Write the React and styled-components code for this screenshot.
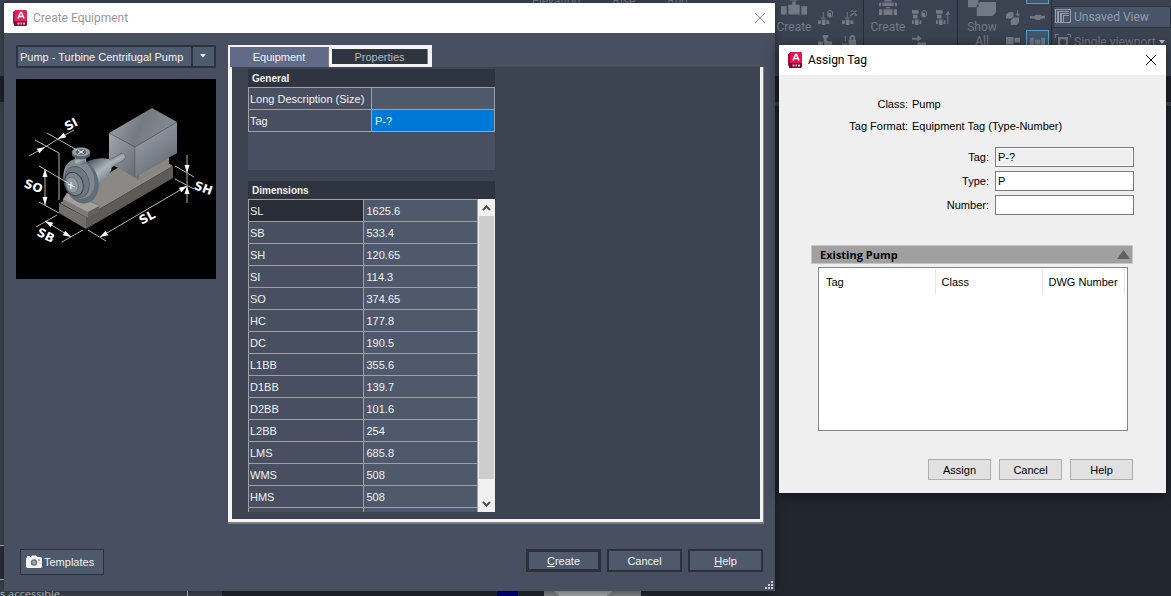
import React, {useState} from "react";
import styled, {createGlobalStyle} from "styled-components";

const dimensions = [
	["SL", "1625.6"],
	["SB", "533.4"],
	["SH", "120.65"],
	["SI", "114.3"],
	["SO", "374.65"],
	["HC", "177.8"],
	["DC", "190.5"],
	["L1BB", "355.6"],
	["D1BB", "139.7"],
	["D2BB", "101.6"],
	["L2BB", "254"],
	["LMS", "685.8"],
	["WMS", "508"],
	["HMS", "508"],
	["", ""],
];

const AppLogo = ({faded}) => (
	<Logo viewBox="0 0 14 16" $faded={faded} aria-hidden="true">
		<path d="M0 2l3-2v12l-3 2z" fill="#b0063a" />
		<path d="M2 0h11l1 1v11H2z" fill="#e5164f" />
		<path d="M1 11h13v4l-1 1H1z" fill="#7d0a2c" />
		<path d="M5 8.500L7.500 2.500h1L11 8.500M6 6.500h4" fill="none" stroke="#fff" strokeWidth="1.500" />
		<path d="M4.500 13.500h2M7.500 13.500h1.500M10 13.500h2" stroke="#e9b9c8" strokeWidth="2" />
	</Logo>
);

const CloseIcon = () => (
	<svg width="12" height="12" viewBox="0 0 12 12" aria-hidden="true">
		<path d="M1 1l10 10M11 1L1 11" stroke="currentColor" fill="none" />
	</svg>
);

const CameraIcon = () => (
	<svg width="16" height="14" viewBox="0 0 16 14" aria-hidden="true">
		<path d="M1 3V1h3v1h1l1-1.500h4L11.500 2H15l1 1v9l-1 1H1l-1-1V3z" fill="#f4f4f4" />
		<circle cx="8" cy="7.500" r="3.200" fill="#6e7278" />
		<circle cx="8" cy="7.500" r="1.700" fill="#a4a8ad" />
		<path d="M12 5h2" stroke="#6e7278" />
	</svg>
);

const Arrow = ({x, y, angle}) => (
	<path d="M0 0l-8-2.500v5z" fill="#fff" transform={`translate(${x} ${y}) rotate(${angle})`} />
);

const PumpDrawing = () => (
	<Drawing viewBox="0 0 200 200" role="img" aria-label="Turbine centrifugal pump">
		<defs>
			<linearGradient id="top" x1="0" y1="0" x2="1" y2="0.300">
				<stop offset="0" stopColor="#a9abb3" />
				<stop offset="0.550" stopColor="#747a82" />
				<stop offset="1" stopColor="#858b93" />
			</linearGradient>
			<linearGradient id="left" x1="0" y1="0" x2="1" y2="1">
				<stop offset="0" stopColor="#a4a6ae" />
				<stop offset="1" stopColor="#646c74" />
			</linearGradient>
			<linearGradient id="right" x1="0" y1="0" x2="0.600" y2="1">
				<stop offset="0" stopColor="#a6a9b1" />
				<stop offset="1" stopColor="#626c76" />
			</linearGradient>
			<linearGradient id="cone" x1="0.200" y1="0" x2="0.800" y2="1">
				<stop offset="0" stopColor="#4f5a64" />
				<stop offset="0.450" stopColor="#aeb4bb" />
				<stop offset="1" stopColor="#59636d" />
			</linearGradient>
		</defs>
		<rect width="200" height="200" fill="#000" />
		<path d="M44 124L131 71l26 16-87 51z" fill="#8b8885" />
		<path d="M43 124l27 14v12l-27-16z" fill="#716e6b" />
		<path d="M70 138l87-51v12l-87 51z" fill="#5d5a58" />
		<path d="M106 91l17 10 30-17v-7l-30 17z" fill="#726f6c" />
		<path d="M123 96l30-17v5l-30 17z" fill="#898683" />
		<path d="M47 120l4-6 32 12v6l-11 6-25-13z" fill="#a29f9c" stroke="#615e5b" strokeWidth="0.500" />
		<path d="M47 120l25 13v5l-25-13z" fill="#7d7a77" />
		<path d="M72 133l11-6v5l-11 6z" fill="#625f5c" />
		<path d="M93 54l43-25 25 14-42 25z" fill="url(#top)" />
		<path d="M93 54l26 14v30L93 84z" fill="url(#left)" />
		<path d="M119 68l42-25v31l-42 24z" fill="url(#right)" />
		<path d="M93 54l26 14v30M119 68l42-25" fill="none" stroke="#555d65" strokeWidth="0.600" />
		<path d="M93 81l13-7q4 1 3 6l-14 9z" fill="url(#cone)" stroke="#4a535c" strokeWidth="0.500" />
		<path d="M72 82q10-4 21-2 4 5 2 12-8 9-13 17z" fill="url(#cone)" />
		<ellipse cx="65" cy="102" rx="17" ry="23" fill="#606c77" transform="rotate(-18 65 102)" />
		<ellipse cx="63" cy="100" rx="15" ry="20" fill="#808890" transform="rotate(-18 63 100)" />
		<ellipse cx="61" cy="103" rx="12" ry="16" fill="#6d7780" stroke="#48515a" strokeWidth="0.600" transform="rotate(-18 61 103)" />
		<ellipse cx="58" cy="105" rx="9" ry="12" fill="#7d868e" stroke="#39424b" transform="rotate(-20 58 105)" />
		<ellipse cx="56" cy="106" rx="6" ry="8" fill="#929aa1" stroke="#59626a" strokeWidth="0.600" transform="rotate(-20 56 106)" />
		<path d="M59 76v8q6 4 11 0v-8z" fill="url(#cone)" />
		<path d="M56 73v4q9 7 18 0v-4z" fill="#57616a" />
		<ellipse cx="65" cy="73" rx="9" ry="4.500" fill="#9ba1a8" stroke="#555e67" strokeWidth="0.600" />
		<ellipse cx="65" cy="73" rx="5.500" ry="2.800" fill="#5d666e" />
		<path d="M62 71l6 4M62 75l6-4M52 105l7 3M55 103v7" stroke="#fff" />
		<g stroke="#e2e2e2" strokeWidth="0.800" fill="none">
			<path d="M13 77l16-9M42 60l16-9M29 68l13-8M19 61l24 13v47M31 54l30 17" />
			<path d="M29 90v36M23 87l29 17M23 123l20 11" />
			<path d="M29 142l26 16M20 148l21-12M46 163l21-12" />
			<path d="M84 158l87-51M72 151l18 11M159 100l19 10M159 87l19 11" />
			<path d="M171 76v48" stroke="#777" strokeWidth="1.500" />
		</g>
		<Arrow x={29} y={68} angle={-30} />
		<Arrow x={42} y={60} angle={150} />
		<Arrow x={29} y={90} angle={-90} />
		<Arrow x={29} y={126} angle={90} />
		<Arrow x={29} y={142} angle={210} />
		<Arrow x={55} y={158} angle={30} />
		<Arrow x={84} y={158} angle={150} />
		<Arrow x={171} y={107} angle={-30} />
		<Arrow x={171} y={94} angle={90} />
		<Arrow x={171} y={107} angle={-90} />
		<DrawingLabel transform="translate(57 49) rotate(-28)">SI</DrawingLabel>
		<DrawingLabel transform="translate(16 111) rotate(20)">SO</DrawingLabel>
		<DrawingLabel transform="translate(28 160) rotate(26)">SB</DrawingLabel>
		<DrawingLabel transform="translate(133 142) rotate(-28)">SL</DrawingLabel>
		<DrawingLabel transform="translate(186 113) rotate(20)">SH</DrawingLabel>
	</Drawing>
);

const ribbonPaths = {
	pipe: "M0 10h3.500v5H0zM4.500 9h7v6h-7zM12.500 10H16v5h-3.500zM5.500 5h5v1.500h-5zM7 7h2v2H7z",
	flange: "M5 1h6v2H5zM0 4h2v3H0zM3 4h10v3H3zM14 4h2v3h-2zM6 8h4v1H6zM0 10h3v5H0zM4 10h8v5H4zM13 10h3v5h-3z",
	boxes: "M0 6h6v5H0zM5 10l2-2h9v6l-2 2H5z",
	attach: "M5 2h1v6H5zM3 8h5v1H3zM0 11h3v4H0zM4 10h4v6H4zM9 11h3v4H9zM10 2l2-2h2l2 2v4l-2 2h-2l-1-1V3h3v3h1V2l-1-1h-2l-1 1v5h-1z",
	link: "M5 2h1v6H5zM3 8h5v1H3zM0 11h3v4H0zM4 10h4v6H4zM9 11h3v4H9zM8 6l7-6 1 1-7 6zM9 1l2-1 5 5-1 2-2-2 1-1-3-3-1 1z",
	elbow: "M5 0h6v3H9c0 4 2 4 6 4v5h-5C6 12 6 8 6 3H5zM0 7h5v4H0z",
	lock: "M3 1h1v6H3zM0 9h6v1H0zM8 5V2l2-2h2l2 2v3h1v6H7V5zM10 2v3h2V2z",
	valve: "M0 0h7v4H0zM1 5h5v4H1zM0 11h2v4H0zM3 10h4v6H3zM8 11h2v4H8zM10 2l2-2h2l2 2v4l-2 2h-2l-1-1V3h3v3h1V2l-1-1h-2l-1 1v5h-1z",
	raise: "M0 0h7v4H0zM1 5h5v4H1zM0 11h2v4H0zM3 10h4v6H3zM8 11h2v4H8zM12 15V5h-2l3-4 2 4h-2v10z",
	sheet: "M0 3h6V0l4 4-4 3V5H0zM6 8h9v8H5z",
	cubes: "M0 5l3-3h5v5l-2 2H0zM5 11l3-3h6v5l-3 3H5zM12 0h1v4h2l-2 3-3-3h2z",
	saddle: "M0 6l4 1 2-2h5l1 1h4v3h-4l-2 2-4-1-2-1H0z",
	blocks: "M0 2h8v8H0zM9 3h6v5H9z",
	group: "M0 3h4v9H0zM5 5h6v5H5zM12 3h4v9h-4z",
	view: "M0 0h16v14H0zM1 1v12h14V1zM2 2h12v1H4v10H2zM5 4h9v1H7v8H5zM8 6h6v1H9v6H8z",
	frame: "M0 0h4v1H1v3H0zM12 0h4v4h-1V1h-3zM3 3h10v10H3zM8 5a3 3 0 100 6 3 3 0 000-6z",
};

const RibbonIcon = ({name, size = 15}) => (
	<svg width={size} height={size} viewBox="0 0 16 16" aria-hidden="true">
		<path d={ribbonPaths[name]} fill="currentColor" fillRule="evenodd" />
	</svg>
);

const Ribbon = () => (
	<RibbonBar>
		<RibbonTail>
			<span>Elevation</span>
			<span>Rise</span>
			<span>Run</span>
		</RibbonTail>
		<RibbonPanel>
			<BigTool><RibbonIcon name="pipe" size={26} />Create</BigTool>
			<ToolGrid>
				<Tool><RibbonIcon name="attach" /></Tool>
				<Tool><RibbonIcon name="link" /></Tool>
				<Tool><RibbonIcon name="elbow" /></Tool>
				<Tool><RibbonIcon name="lock" /></Tool>
			</ToolGrid>
		</RibbonPanel>
		<RibbonPanel>
			<BigTool><RibbonIcon name="flange" size={18} />Create</BigTool>
			<ToolGrid>
				<Tool><RibbonIcon name="valve" /></Tool>
				<Tool><RibbonIcon name="raise" /></Tool>
				<Tool><RibbonIcon name="sheet" /></Tool>
			</ToolGrid>
		</RibbonPanel>
		<RibbonPanel>
			<BigTool $twoLines><RibbonIcon name="boxes" size={28} />Show<br />All</BigTool>
			<ToolGrid $threeRows>
				<Tool />
				<Tool $active />
				<Tool><RibbonIcon name="cubes" /></Tool>
				<Tool><RibbonIcon name="saddle" /></Tool>
				<Tool><RibbonIcon name="blocks" /></Tool>
				<Tool $active><RibbonIcon name="group" /></Tool>
			</ToolGrid>
		</RibbonPanel>
		<ViewPanel>
			<ViewField $filled><RibbonIcon name="view" size={16} />Unsaved View</ViewField>
			<ViewField>
				<RibbonIcon name="frame" size={16} />
				Single viewport
				<svg width="6" height="4" viewBox="0 0 6 4" aria-hidden="true"><path d="M0 0h6L3 4z" fill="#c0c4ca" /></svg>
			</ViewField>
		</ViewPanel>
	</RibbonBar>
);

const CreateEquipment = () => {
	const [tab, setTab] = useState("Equipment");

	return (
		<CreateWindow role="dialog" aria-label="Create Equipment">
			<TitleBar $inactive>
				<AppLogo faded />
				<h1>Create Equipment</h1>
				<CloseButton aria-label="Close"><CloseIcon /></CloseButton>
			</TitleBar>
			<CreateBody>
				<SideColumn>
					<Combo>
						<select aria-label="Equipment type">
							<option>Pump - Turbine Centrifugal Pump</option>
						</select>
						<svg width="21" height="19" viewBox="0 0 21 19" aria-hidden="true">
							<path d="M7 7h6l-3 3.500z" fill="#f0f0f0" />
						</svg>
					</Combo>
					<PumpDrawing />
				</SideColumn>
				<TabArea>
					<TabStrip role="tablist">
						{["Equipment", "Properties"].map((name) => (
							<Tab
								key={name}
								role="tab"
								aria-selected={tab === name}
								$active={tab === name}
								onClick={() => setTab(name)}
							>
								{name}
							</Tab>
						))}
					</TabStrip>
					<TabPanel role="tabpanel">
						<Section>
							<SectionTitle>General</SectionTitle>
							<GeneralBox>
								<PropertyTable>
									<tbody>
										<tr>
											<NameCell>Long Description (Size)</NameCell>
											<ValueCell />
										</tr>
										<tr>
											<NameCell>Tag</NameCell>
											<ValueCell $selected>P-?</ValueCell>
										</tr>
									</tbody>
								</PropertyTable>
							</GeneralBox>
						</Section>
						<Section>
							<SectionTitle>Dimensions</SectionTitle>
							<ScrollBox>
								<PropertyTable>
									<tbody>
										{dimensions.map(([name, value], i) => (
											<tr key={i}>
												<NameCell $current={i === 0}>{name}</NameCell>
												<ValueCell>{value}</ValueCell>
											</tr>
										))}
									</tbody>
								</PropertyTable>
								<ScrollBar>
									<ScrollButton aria-label="Scroll up">
										<svg width="9" height="6" viewBox="0 0 9 6"><path d="M1 5l3.500-3.500L8 5" fill="none" stroke="#505050" strokeWidth="2" /></svg>
									</ScrollButton>
									<ScrollThumb />
									<ScrollButton aria-label="Scroll down">
										<svg width="9" height="6" viewBox="0 0 9 6"><path d="M1 1l3.500 3.500L8 1" fill="none" stroke="#505050" strokeWidth="2" /></svg>
									</ScrollButton>
								</ScrollBar>
							</ScrollBox>
						</Section>
					</TabPanel>
				</TabArea>
			</CreateBody>
			<CreateFooter>
				<TemplatesButton><CameraIcon />Templates</TemplatesButton>
				<DarkButton $primary><u>C</u>reate</DarkButton>
				<DarkButton>Cancel</DarkButton>
				<DarkButton><u>H</u>elp</DarkButton>
			</CreateFooter>
			<Grip viewBox="0 0 8 8" aria-hidden="true">
				<path d="M6 0h2v2H6zM3 3h2v2H3zM6 3h2v2H6zM0 6h2v2H0zM3 6h2v2H3zM6 6h2v2H6z" fill="#c8cacf" />
			</Grip>
		</CreateWindow>
	);
};

const AssignTag = () => {
	const [type, setType] = useState("P");
	const [number, setNumber] = useState("");

	return (
		<AssignWindow role="dialog" aria-label="Assign Tag">
			<TitleBar>
				<AppLogo />
				<h1>Assign Tag</h1>
				<CloseButton aria-label="Close"><CloseIcon /></CloseButton>
			</TitleBar>
			<AssignBody>
				<InfoList>
					<dt>Class:</dt>
					<dd>Pump</dd>
					<dt>Tag Format:</dt>
					<dd>Equipment Tag (Type-Number)</dd>
				</InfoList>
				<FieldGrid>
					<label htmlFor="tag">Tag:</label>
					<TextField id="tag" value="P-?" readOnly />
					<label htmlFor="type">Type:</label>
					<TextField id="type" value={type} onChange={(e) => setType(e.target.value)} />
					<label htmlFor="number">Number:</label>
					<TextField id="number" value={number} onChange={(e) => setNumber(e.target.value)} />
				</FieldGrid>
				<ExistingHeader>
					Existing Pump
					<svg width="13" height="9" viewBox="0 0 13 9" aria-hidden="true"><path d="M6.500 0L13 9H0z" fill="#606060" /></svg>
				</ExistingHeader>
				<ExistingList>
					<table>
						<thead>
							<tr>
								<th>Tag</th>
								<th>Class</th>
								<th>DWG Number</th>
							</tr>
						</thead>
					</table>
				</ExistingList>
				<AssignFooter>
					<LightButton>Assign</LightButton>
					<LightButton>Cancel</LightButton>
					<LightButton>Help</LightButton>
				</AssignFooter>
			</AssignBody>
		</AssignWindow>
	);
};

const App = () => (
	<Desktop>
		<GlobalStyle />
		<Backdrop>
			<Ribbon />
			<FileTabs />
			<Workspace>
				<Palette>
					<PaletteHeader />
					<PaletteBand />
					<PaletteNote>s accessible</PaletteNote>
				</Palette>
				<Canvas>
					<svg width="420" height="10" viewBox="0 0 420 10" aria-hidden="true">
						<path d="M275 0h21v10h-21z" fill="#00007c" />
						<path d="M322 0h97v10h-97z" fill="#7d7e82" />
						<path d="M326 0h72l-14 10h-46z" fill="#a2a4a8" />
					</svg>
				</Canvas>
			</Workspace>
		</Backdrop>
		<Windows>
			<CreateEquipment />
			<AssignTag />
		</Windows>
	</Desktop>
);

const GlobalStyle = createGlobalStyle`
  * {
    box-sizing: border-box;
  }

  body {
    margin: 0;
    background-color: #20252d;
    font-family: "Liberation Sans", Arial, sans-serif;
    font-size: 11px;
    line-height: 14px;
  }

  button, input, select {
    font: inherit;
    color: inherit;
    margin: 0;
    padding: 0;
  }
`;

const Desktop = styled.div`
  display: grid;
  grid-template-columns: minmax(0, 1fr);
  height: 100vh;
  min-height: 596px;
  overflow: hidden;
`;

const Backdrop = styled.div`
  grid-area: 1 / 1;
  display: flex;
  flex-direction: column;
  min-height: 0;
  overflow: hidden;
  background-color: #20252d;
`;

const Windows = styled.main`
  grid-area: 1 / 1;
  display: grid;
  grid-template-columns: minmax(0, 1fr) 387px;
  align-items: start;
  gap: 4px;
  padding: 3px 5px 5px 4px;
`;

const RibbonBar = styled.div`
  display: flex;
  flex: none;
  height: 76px;
  overflow: hidden;
  background-color: #3b4352;
  color: #727984;
  font-family: Roboto, "Open Sans", sans-serif;
  font-size: 12px;
`;

const RibbonTail = styled.div`
  display: flex;
  flex: 1;
  justify-content: flex-end;
  gap: 32px;
  margin-top: -6px;
  padding-right: 82px;
`;

const RibbonPanel = styled.div`
  display: flex;
  flex: none;
  width: 94px;
  gap: 2px;
  padding-left: 6px;
  border-right: 1px solid #252b35;
`;

const BigTool = styled.button`
  display: flex;
  flex-direction: column;
  align-items: center;
  justify-content: flex-end;
  width: 36px;
  height: 48px;
  padding-bottom: ${(props) => (props.$twoLines ? 0 : "14px")};
  border: none;
  background: none;
  color: inherit;

  svg {
    flex: none;
    margin-bottom: 4px;
  }
`;

const ToolGrid = styled.div`
  display: grid;
  grid-template-columns: 23px 23px;
  grid-auto-rows: 24px;
  align-content: start;
  gap: 1px;
  margin-top: ${(props) => (props.$threeRows ? "-20px" : "5px")};
`;

const Tool = styled.button`
  display: flex;
  align-items: center;
  justify-content: center;
  border: 1px solid ${(props) => (props.$active ? "#5a9aca" : "transparent")};
  background-color: ${(props) => (props.$active ? "#3f566d" : "transparent")};
`;

const ViewPanel = styled.div`
  display: flex;
  flex: none;
  flex-direction: column;
  gap: 3px;
  width: 119px;
  padding: 6px 0 0 1px;
`;

const ViewField = styled.button`
  display: flex;
  align-items: center;
  gap: 3px;
  height: 22px;
  padding-left: 1px;
  border: 1px solid ${(props) => (props.$filled ? "#2d3440" : "transparent")};
  background-color: ${(props) => (props.$filled ? "#485468" : "transparent")};
  color: ${(props) => (props.$filled ? "#959ca7" : "#727984")};
  white-space: nowrap;
`;

const FileTabs = styled.div`
  flex: none;
  height: 30px;
  background-color: #20232b;
  border-bottom: 4px solid #3b404c;
`;

const Workspace = styled.div`
  display: flex;
  flex: 1;
  min-height: 0;
`;

const Palette = styled.div`
  display: flex;
  flex-direction: column;
  width: 222px;
  background-color: #3b4350;
  color: #c3c7ce;
`;

const PaletteHeader = styled.div`
  flex: 1;
  border-bottom: 1px solid #b5bac2;
`;

const PaletteBand = styled.div`
  height: 34px;
  border-bottom: 1px solid #b5bac2;
  background-color: #2b2f38;
`;

const PaletteNote = styled.div`
  width: 188px;
  height: 16px;
  padding-top: 6px;
  border-right: 1px solid #b5bac2;
  font-family: "Open Sans", sans-serif;
  font-size: 11px;
  line-height: 16px;
`;

const Canvas = styled.div`
  display: flex;
  flex: 1;
  align-items: flex-end;
  background-color: #20272f;
`;

const CreateWindow = styled.section`
  display: flex;
  flex-direction: column;
  min-height: 588px;
  background-color: #474f61;
  color: #f2f2f2;
  box-shadow: 0 1px 8px rgba(0, 0, 0, 0.4);
`;

const AssignWindow = styled.section`
  margin-top: 42px;
  background-color: #efefef;
  color: #000000;
  box-shadow: 0 2px 12px rgba(0, 0, 0, 0.5);
`;

const TitleBar = styled.header`
  display: flex;
  align-items: center;
  height: 30px;
  padding: 0 9px;
  background-color: #ffffff;
  color: ${(props) => (props.$inactive ? "#999999" : "#000000")};

  h1 {
    flex: 1;
    margin: 0 0 0 6px;
    font-family: Roboto, "Open Sans", sans-serif;
    font-size: 12px;
    font-weight: 400;
  }
`;

const Logo = styled.svg`
  width: 14px;
  height: 16px;
  opacity: ${(props) => (props.$faded ? 0.95 : 1)};
`;

const CloseButton = styled.button`
  display: flex;
  border: none;
  background: none;
`;

const CreateBody = styled.div`
  display: flex;
  gap: 12px;
  padding: 12px 12px 0;
`;

const SideColumn = styled.div`
  display: flex;
  flex: none;
  flex-direction: column;
  gap: 11px;
  width: 200px;
`;

const Combo = styled.div`
  display: flex;
  height: 23px;
  border: 2px solid #2d323e;
  background-color: #4e5a6e;

  select {
    flex: 1;
    min-width: 0;
    padding-left: 2px;
    border: none;
    border-right: 2px solid #2d323e;
    border-radius: 0;
    outline: none;
    appearance: none;
    background-color: transparent;
  }
`;

const Drawing = styled.svg`
  width: 200px;
  height: 200px;
`;

const DrawingLabel = styled.text`
  fill: #ffffff;
  font-family: "DejaVu Sans", sans-serif;
  font-size: 12px;
  font-weight: 700;
  text-anchor: middle;
`;

const TabArea = styled.div`
  display: flex;
  flex: 1;
  flex-direction: column;
  align-items: flex-start;
  min-width: 0;
`;

const TabStrip = styled.div`
  display: flex;
  gap: 3px;
  height: 22px;
  padding: 2px 4px 0 2px;
  background-color: #f3f3f3;
`;

const Tab = styled.button`
  width: ${(props) => (props.$active ? "99px" : "96px")};
  height: ${(props) => (props.$active ? "20px" : "15px")};
  margin-top: ${(props) => (props.$active ? 0 : "2px")};
  border: none;
  border-right: 1px solid #808080;
  background-color: ${(props) => (props.$active ? "#5f6b87" : "#2e3440")};
  color: ${(props) => (props.$active ? "#f2f2f2" : "#b4b8be")};
`;

const TabPanel = styled.div`
  display: flex;
  flex-direction: column;
  gap: 11px;
  width: 100%;
  padding: 2px 16px 7px;
  border: solid #f3f3f3;
  border-width: 0 3px 3px 4px;
  background-color: #3c4452;
  box-shadow: 0 1px 0 1px #808080;
  clip-path: inset(0 -1px -2px 0);
`;

const Section = styled.div`
  width: 247px;
`;

const SectionTitle = styled.h2`
  margin: 0;
  padding: 3px 4px 1px;
  background-color: #2e3440;
  font-size: 10px;
  font-weight: 700;
`;

const GeneralBox = styled.div`
  min-height: 83px;
  background-color: #474f61;
`;

const PropertyTable = styled.table`
  flex: 1;
  width: 100%;
  border-collapse: collapse;
  table-layout: fixed;

  tr {
    height: 22px;
  }

  td {
    border: 1px solid #a0a0a0;
  }
`;

const NameCell = styled.td`
  padding: 0 1px;
  background-color: ${(props) => (props.$current ? "#282d37" : "#474f61")};
  white-space: nowrap;
`;

const ValueCell = styled.td`
  padding: 0 3px;
  background-color: ${(props) => (props.$selected ? "#0078d7" : "#4e5a6c")};
`;

const ScrollBox = styled.div`
  display: flex;
  align-items: flex-start;
  height: 313px;
  overflow: hidden;
`;

const ScrollBar = styled.div`
  display: flex;
  flex: none;
  flex-direction: column;
  width: 17px;
  height: 100%;
  background-color: #f0f0f0;
`;

const ScrollButton = styled.button`
  display: flex;
  align-items: center;
  justify-content: center;
  height: 17px;
  border: none;
  background: none;
`;

const ScrollThumb = styled.div`
  flex: 1;
  margin: 0 1px 16px;
  background-color: #cdcdcd;
`;

const CreateFooter = styled.footer`
  display: flex;
  gap: 6px;
  padding: 27px 12px 0 16px;
`;

const DarkButton = styled.button`
  width: 75px;
  height: 23px;
  border: ${(props) => (props.$primary ? "3px" : "2px")} solid #2b303c;
  background-color: #4e5a6c;
  color: #f2f2f2;
`;

const TemplatesButton = styled(DarkButton)`
  display: flex;
  align-items: center;
  gap: 2px;
  width: 84px;
  height: 26px;
  margin-right: auto;
  padding-left: 5px;
  border-width: 1px;
`;

const Grip = styled.svg`
  width: 8px;
  height: 8px;
  margin: auto 2px 2px auto;
`;

const AssignBody = styled.div`
  padding: 22px 33px 13px 32px;
`;

const InfoList = styled.dl`
  display: grid;
  grid-template-columns: 97px 1fr;
  gap: 8px 4px;
  margin: 0 0 14px;

  dt {
    text-align: right;
    white-space: nowrap;
  }

  dd {
    margin: 0;
  }
`;

const FieldGrid = styled.div`
  display: grid;
  grid-template-columns: 1fr 139px;
  align-items: center;
  gap: 4px 6px;
  margin-right: -1px;
  text-align: right;
`;

const TextField = styled.input`
  width: 100%;
  height: 20px;
  padding: 0 2px;
  border: 1px solid #7a7a7a;
  border-radius: 0;
  outline: none;
  background-color: #ffffff;

  &:read-only {
    background-color: #efefef;
    box-shadow: inset 0 0 0 1px #ffffff;
  }
`;

const ExistingHeader = styled.h2`
  display: flex;
  align-items: center;
  justify-content: space-between;
  height: 19px;
  margin: 30px 0 3px;
  padding: 0 2px 0 8px;
  border: 1px solid #c6c6c6;
  background-color: #a0a0a0;
  font-family: "Open Sans", "Noto Sans", sans-serif;
  font-size: 11px;
  font-weight: 700;
`;

const ExistingList = styled.div`
  min-height: 164px;
  margin: 0 5px 0 7px;
  padding: 1px 2px 0 0;
  border: 1px solid #828790;
  background-color: #ffffff;

  table {
    width: 100%;
    border-collapse: collapse;
    table-layout: fixed;
  }

  th {
    width: 35%;
    height: 25px;
    padding: 0 6px;
    border-right: 1px solid #e5e5e5;
    font-weight: 400;
    text-align: left;
    white-space: nowrap;
  }

  th:first-child {
    width: 38%;
    padding-left: 7px;
  }

  th:last-child {
    width: 27%;
  }
`;

const AssignFooter = styled.footer`
  display: flex;
  justify-content: flex-end;
  gap: 8px;
  margin-top: 28px;
`;

const LightButton = styled.button`
  width: 63px;
  height: 21px;
  border: 1px solid #adadad;
  background-color: #e1e1e1;
`;

export default App;
